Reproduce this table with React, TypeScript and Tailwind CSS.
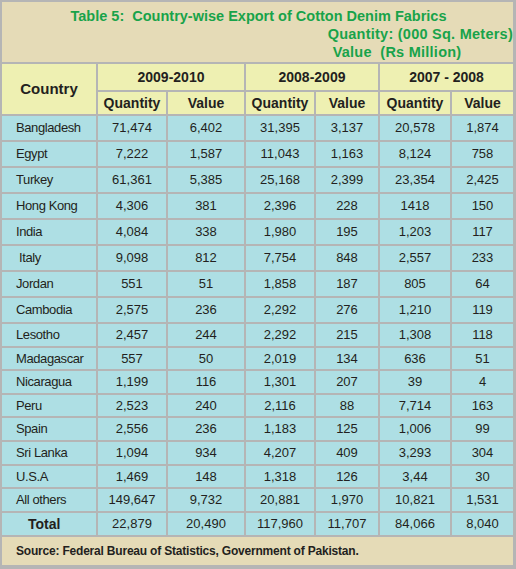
import React from "react";

type Row = { name: string; vals: string[]; h: string; nameCls?: string; bold?: boolean };

const rows: Row[] = [
  { name: "Bangladesh", vals: ["71,474", "6,402", "31,395", "3,137", "20,578", "1,874"], h: "h-[24px]" },
  { name: "Egypt", vals: ["7,222", "1,587", "11,043", "1,163", "8,124", "758"], h: "h-[24px]" },
  { name: "Turkey", vals: ["61,361", "5,385", "25,168", "2,399", "23,354", "2,425"], h: "h-[24px]" },
  { name: "Hong Kong", vals: ["4,306", "381", "2,396", "228", "1418", "150"], h: "h-[24px]" },
  { name: "India", vals: ["4,084", "338", "1,980", "195", "1,203", "117"], h: "h-[24px]" },
  { name: "Italy", vals: ["9,098", "812", "7,754", "848", "2,557", "233"], h: "h-[24px]", nameCls: "pl-[17px]" },
  { name: "Jordan", vals: ["551", "51", "1,858", "187", "805", "64"], h: "h-[24px]" },
  { name: "Cambodia", vals: ["2,575", "236", "2,292", "276", "1,210", "119"], h: "h-[24px]" },
  { name: "Lesotho", vals: ["2,457", "244", "2,292", "215", "1,308", "118"], h: "h-[22px]" },
  { name: "Madagascar", vals: ["557", "50", "2,019", "134", "636", "51"], h: "h-[21px]" },
  { name: "Nicaragua", vals: ["1,199", "116", "1,301", "207", "39", "4"], h: "h-[22px]" },
  { name: "Peru", vals: ["2,523", "240", "2,116", "88", "7,714", "163"], h: "h-[21px]" },
  { name: "Spain", vals: ["2,556", "236", "1,183", "125", "1,006", "99"], h: "h-[22px]" },
  { name: "Sri Lanka", vals: ["1,094", "934", "4,207", "409", "3,293", "304"], h: "h-[22px]" },
  { name: "U.S.A", vals: ["1,469", "148", "1,318", "126", "3,44", "30"], h: "h-[21px]" },
  { name: "All others", vals: ["149,647", "9,732", "20,881", "1,970", "10,821", "1,531"], h: "h-[22px]" },
  { name: "Total", vals: ["22,879", "20,490", "117,960", "11,707", "84,066", "8,040"], h: "h-[22px]", nameCls: "pl-[26px]", bold: true },
];

const cols = "grid grid-cols-[94px_68px_76px_68px_62px_70px_61px] gap-x-[2px]";

export default function App() {
  return (
    <div
      className="w-[516px] h-[569px] bg-[#b5b5b5] pt-[2px] pl-[2px] pr-[3px] pb-[3px] flex flex-col gap-[2px] text-[#231f20]"
      style={{ fontFamily: '"Liberation Sans", Arial, sans-serif' }}
    >
      <div className="h-[60px] bg-[#e5dbb7] flex flex-col text-[#18a34a] font-bold text-[14.5px] leading-[18px]">
        <div className="text-center pt-[5px] pl-[2px]">Table 5:&nbsp; Country-wise Export of Cotton Denim Fabrics</div>
        <div className="flex justify-end tracking-[0.25px]">
          <div className="flex flex-col">
            <div>Quantity: (000 Sq. Meters)</div>
            <div className="pl-[5px]">Value&nbsp; (Rs Million)</div>
          </div>
        </div>
      </div>

      <div className={`${cols} grid-rows-[26px_22px] gap-y-[2px] font-bold text-[14px]`}>
        <div className="row-span-2 bg-[#eef0b2] flex items-center justify-center text-[15px]">Country</div>
        <div className="col-span-2 bg-[#eef0b2] flex items-center justify-center">2009-2010</div>
        <div className="col-span-2 bg-[#eef0b2] flex items-center justify-center">2008-2009</div>
        <div className="col-span-2 bg-[#eef0b2] flex items-center justify-center">2007 - 2008</div>
        {["Quantity", "Value", "Quantity", "Value", "Quantity", "Value"].map((t, i) => (
          <div key={i} className="bg-[#eef0b2] flex items-center justify-center">{t}</div>
        ))}
      </div>

      {rows.map((r) => (
        <div key={r.name} className={`${cols} ${r.h} text-[13px]`}>
          <div
            className={`bg-[#aedfe4] flex items-center ${r.nameCls ?? "pl-[14px]"} ${r.bold ? "font-bold text-[14px]" : "tracking-[-0.4px]"}`}
          >
            {r.name}
          </div>
          {r.vals.map((v, i) => (
            <div key={i} className="bg-[#aedfe4] flex items-center justify-center">{v}</div>
          ))}
        </div>
      ))}

      <div className="h-[28px] bg-[#e5dbb7] flex items-center pl-[14px] text-[12px] font-bold tracking-[-0.2px]">
        Source: Federal Bureau of Statistics, Government of Pakistan.
      </div>
    </div>
  );
}
